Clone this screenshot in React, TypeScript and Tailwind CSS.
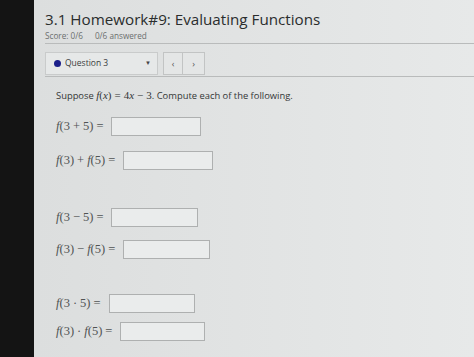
import React from 'react';

type Row = {
  label: React.ReactNode;
  mt: string;
  boxW: string;
};

const F = () => <i>f</i>;
const Op = ({ c }: { c: string }) => <span className="mx-[3px]">{c}</span>;

const rows: Row[] = [
  {
    label: (
      <>
        <F />(3<Op c="+" />5)<Op c="=" />
      </>
    ),
    mt: 'mt-[14px]',
    boxW: 'w-[90px]',
  },
  {
    label: (
      <>
        <F />(3)<Op c="+" /><F />(5)<Op c="=" />
      </>
    ),
    mt: 'mt-[15px]',
    boxW: 'w-[90px]',
  },
  {
    label: (
      <>
        <F />(3<Op c="−" />5)<Op c="=" />
      </>
    ),
    mt: 'mt-[38px]',
    boxW: 'w-[87px]',
  },
  {
    label: (
      <>
        <F />(3)<Op c="−" /><F />(5)<Op c="=" />
      </>
    ),
    mt: 'mt-[13px]',
    boxW: 'w-[87px]',
  },
  {
    label: (
      <>
        <F />(3<Op c="·" />5)<Op c="=" />
      </>
    ),
    mt: 'mt-[35px]',
    boxW: 'w-[86px]',
  },
  {
    label: (
      <>
        <F />(3)<Op c="·" /><F />(5)<Op c="=" />
      </>
    ),
    mt: 'mt-[9px]',
    boxW: 'w-[85px]',
  },
];

export default function App() {
  return (
    <div className="flex w-[474px] h-[357px] overflow-hidden bg-[#e2e4e4]">
      <div className="w-[34px] shrink-0 bg-[#141414]" />
      <div className="flex-1 bg-gradient-to-r from-[#dcdede] to-[#e7e9e9] pl-[11px] font-['Open_Sans',sans-serif] text-[#2f3232]">
        <h1 className="mt-[9px] text-[15.2px] leading-[20px] text-[#2a2d2d]">
          3.1 Homework#9: Evaluating Functions
        </h1>
        <div className="mt-[1px] flex gap-[12px] text-[8.2px] leading-[12px] text-[#6b6e6e]">
          <span>Score: 0/6</span>
          <span>0/6 answered</span>
        </div>
        <div className="mt-[1px] border-t border-[#b9bbbb]" />
        <div className="flex items-center gap-[5px] pt-[8px] pb-[1px]">
          <div className="flex h-[23px] w-[113px] items-center border border-[#c9cbcb] bg-[#e6e8e8] pl-[8px] pr-[6px]">
            <span className="h-[7px] w-[7px] rounded-full bg-[#1b1f8a]" />
            <span className="ml-[4px] flex-1 text-[8.5px] text-[#3a3d3d]">Question 3</span>
            <span className="text-[6px] text-[#444]">▼</span>
          </div>
          <div className="flex h-[23px] border border-[#c2c4c4] bg-[#e4e6e6] text-[9px] text-[#555]">
            <span className="flex w-[19px] items-center justify-center border-r border-[#c2c4c4]">‹</span>
            <span className="flex w-[21px] items-center justify-center">›</span>
          </div>
        </div>
        <div className="border-t border-[#b9bbbb]" />
        <div className="ml-[11px] mt-[11px] text-[9.4px] leading-[14px] text-[#343737]">
          Suppose{' '}
          <span className="font-['Liberation_Serif',serif] text-[11px]">
            <i>f</i>(<i>x</i>)<Op c="=" />4<i>x</i><Op c="−" />3
          </span>
          . Compute each of the following.
        </div>
        <div className="ml-[11px] flex flex-col">
          {rows.map((r, i) => (
            <div key={i} className={`flex h-[19px] items-center gap-[5px] ${r.mt}`}>
              <span className="font-['Liberation_Serif',serif] text-[12.5px] text-[#505353]">{r.label}</span>
              <span className={`h-[19px] ${r.boxW} border border-[#aeb0b0] bg-[#eaecec]`} />
            </div>
          ))}
        </div>
      </div>
    </div>
  );
}
